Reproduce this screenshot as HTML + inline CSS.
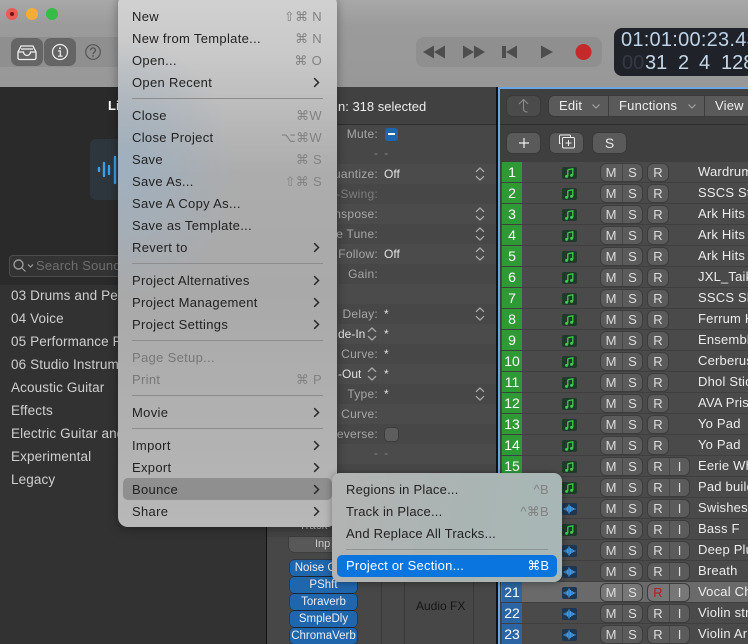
<!DOCTYPE html>
<html><head><meta charset="utf-8"><style>
html,body{margin:0;padding:0;background:#2a2a2a}
#p{position:relative;width:748px;height:644px;overflow:hidden;font-family:"Liberation Sans",sans-serif;font-size:13px;color:#e6e6e6}
#p div,#p svg{position:absolute}
.a{position:absolute;white-space:nowrap}
.l{left:11px;color:#cfcfcf;font-size:13.5px;letter-spacing:.12px;line-height:18px}
.il{right:370px;color:#a6a6a6;font-size:12px;line-height:21px;letter-spacing:.25px}
.iv{left:384px;color:#e0e0e0;font-size:12px;line-height:21px}
.band{left:267px;width:229px;height:20px}
.ud{left:474px;width:12px;height:18px}
.m{left:132px;color:#222;font-size:13px;letter-spacing:.32px;line-height:22px;height:22px}
.s2{letter-spacing:.22px}
.sc{right:426px;color:#828282;font-size:13px;line-height:22px;letter-spacing:.3px}
.ch{left:313px;width:7px;height:11px}
.sep{left:132px;width:191px;height:1px;background:#8d8d8d}
.r{left:501px;width:247px;height:20px;background:#4a4a4a;overflow:hidden}
.n{position:absolute;left:1px;top:0;width:20px;height:20px;color:#fff;font-size:14px;text-align:center;line-height:21px}
.g{background:#2f9a35}.b{background:#2c65a3}
.t{position:absolute;left:197px;top:0;color:#ececec;font-size:13px;line-height:20px;letter-spacing:.2px;white-space:nowrap}
.ms,.ri{position:absolute;top:2px;height:17px;background:#5b5b5b;border-radius:5px;box-shadow:0 0 0 1px #3c3c3c;color:#ddd;font-size:13px;line-height:17px}
.ms{left:100px;width:41px}.ri{left:147px;width:20px}.ri.w{width:41px}
.ms i,.ri i{position:absolute;top:0;font-style:normal;width:20px;text-align:center}
.ms i+i,.ri i+i{left:21px;border-left:1px solid #484848;width:19px}
.ic{position:absolute;left:61px;top:5px;width:15px;height:12px}
.btn{background:#5a5a5a;border-radius:5px;box-shadow:0 0 0 .5px #333;color:#e8e8e8;text-align:center}
.fx{left:290px;width:67px;height:16px;background:#2066ad;border-radius:4px;box-shadow:0 0 0 .5px #1c2430;color:#e8eef6;font-size:11.5px;line-height:16px;text-align:center;overflow:hidden;white-space:nowrap}
</style></head><body><div id="p">

<svg width="0" height="0" style="position:absolute"><defs>
<symbol id="note" viewBox="0 0 15 12"><rect width="15" height="12" rx="2" fill="#1f3a29"/><path d="M5.8 2.800l5-1v6.400M5.800 2.800v6.400" stroke="#45c552" stroke-width="1.300" fill="none"/><circle cx="4.600" cy="9.400" r="1.500" fill="#45c552"/><circle cx="9.600" cy="8.400" r="1.500" fill="#45c552"/></symbol>
<symbol id="wave" viewBox="0 0 15 12"><rect width="15" height="12" rx="2" fill="#1f3650"/><path d="M1.500 6h1.500M4 4.500v3M5.500 3.500v5M7 1.500v9M8.500 3v6M10 4v4M11.500 5v2M13 5.500v1" stroke="#3f9be8" stroke-width="1.300" fill="none"/></symbol>
<symbol id="ud" viewBox="0 0 12 18"><path d="M2 6.800L6 3l4 3.800M2 11.200L6 15l4-3.800" stroke="#b0b0b0" stroke-width="1.200" fill="none"/></symbol>
<symbol id="chv" viewBox="0 0 7 11"><path d="M1.200 1.200L5.500 5.500 1.200 9.800" stroke="#2a2a2a" stroke-width="1.500" fill="none"/></symbol>
</defs></svg>

<!-- toolbar -->
<div style="left:0;top:0;width:748px;height:87px;background:linear-gradient(#a8a8a8,#9b9b9b 30%,#989898)"></div>
<div style="left:0;top:37px;width:118px;height:30px;background:#8f8f8f"></div>
<div style="left:6px;top:8px;width:12px;height:12px;border-radius:50%;background:#ec5a56"></div>
<div style="left:10px;top:12px;width:4px;height:4px;border-radius:50%;background:#6c1512"></div>
<div style="left:26px;top:8px;width:12px;height:12px;border-radius:50%;background:#f3ac35"></div>
<div style="left:46px;top:8px;width:12px;height:12px;border-radius:50%;background:#35bc46"></div>
<div style="left:11px;top:38px;width:32px;height:28px;border-radius:7px;background:#656565"></div>
<div style="left:44px;top:38px;width:32px;height:28px;border-radius:7px;background:#656565"></div>
<svg style="left:16px;top:43px" width="22" height="18" viewBox="0 0 22 18"><path d="M2 9l3-6h12l3 6v6a1.500 1.500 0 0 1-1.500 1.500h-15A1.500 1.500 0 0 1 2 15zM2 9h5.500a3.500 3.500 0 0 0 7 0H20M5 6h12" stroke="#f0f0f0" stroke-width="1.300" fill="none"/></svg>
<svg style="left:51px;top:43px" width="18" height="18" viewBox="0 0 18 18"><circle cx="9" cy="9" r="7.500" stroke="#f0f0f0" stroke-width="1.200" fill="none"/><path d="M7 8h2.300v5M7 13.200h4.500" stroke="#f0f0f0" stroke-width="1.200" fill="none"/><circle cx="9" cy="5.300" r="1" fill="#f0f0f0"/></svg>
<svg style="left:85px;top:44px" width="16" height="16" viewBox="0 0 16 16"><circle cx="8" cy="8" r="7.300" stroke="#555" stroke-width="1.200" fill="none"/><path d="M5.600 6.200a2.400 2.300 0 1 1 3.600 2c-.8.500-1.200 1-1.200 1.900" stroke="#555" stroke-width="1.300" fill="none"/><circle cx="8" cy="12" r=".9" fill="#555"/></svg>
<div style="left:416px;top:37px;width:186px;height:30px;border-radius:8px;background:#8f8f8f"></div>
<svg style="left:416px;top:37px" width="186" height="30" viewBox="0 0 186 30"><g fill="#4d4d4d"><path d="M7 15l11-6.500v13zM18 15l11-6.500v13zM47 8.500l11 6.500-11 6.500zM58 8.500l11 6.500-11 6.500zM86 9h4v12h-4zM101 8.500v13l-11-6.500zM125 8.500l12 6.500-12 6.500z"/></g><circle cx="167.500" cy="15" r="8" fill="#c42a2b"/></svg>
<div style="left:614px;top:28px;width:140px;height:48px;border-radius:8px;background:#1f2229"></div>
<div class="a" style="left:621px;top:28px;color:#bcd3e8;font-size:20px;line-height:24px;letter-spacing:.25px">01:01:00:23.43</div>
<div class="a" style="left:622px;top:51px;color:#343944;font-size:20px;line-height:24px">00</div>
<div class="a" style="left:645px;top:51px;color:#c6d7e8;font-size:20px;line-height:24px">31</div>
<div class="a" style="left:678px;top:51px;color:#c6d7e8;font-size:20px;line-height:24px">2</div>
<div class="a" style="left:699px;top:51px;color:#c6d7e8;font-size:20px;line-height:24px">4</div>
<div class="a" style="left:721px;top:51px;color:#c6d7e8;font-size:20px;line-height:24px">128</div>

<!-- library -->
<div style="left:0;top:87px;width:266px;height:557px;background:#2a2a2a"></div>
<div style="left:0;top:285px;width:266px;height:359px;background:#323232"></div>
<div class="a" style="left:108px;top:97px;color:#fff;font-weight:bold;font-size:13px;line-height:18px">Li</div>
<div style="left:90px;top:139px;width:60px;height:61px;border-radius:6px;background:#2d353d"></div>
<svg style="left:97px;top:155px" width="24" height="30" viewBox="0 0 24 30"><path d="M2 13v3M7 8v13M12 11v8M18 2v26" stroke="#3e9ce6" stroke-width="2.400" stroke-linecap="round" fill="none"/></svg>
<div style="left:9px;top:255px;width:115px;height:20px;border:1px solid #4c4c4c;border-radius:4px;background:#333"></div>
<svg style="left:12px;top:258px" width="24" height="16" viewBox="0 0 24 16"><circle cx="6.500" cy="6.500" r="4.500" stroke="#9a9a9a" stroke-width="1.400" fill="none"/><path d="M10 10l3.500 3.500M16 6.500l2.500 2.500 2.500-2.500" stroke="#9a9a9a" stroke-width="1.200" fill="none"/></svg>
<div class="a" style="left:36px;top:257px;color:#6f6f6f;font-size:13px;line-height:18px;letter-spacing:.2px">Search Sounds</div>
<div class="a l" style="top:287px">03 Drums and Percussion</div>
<div class="a l" style="top:310px">04 Voice</div>
<div class="a l" style="top:333px">05 Performance Patches</div>
<div class="a l" style="top:356px">06 Studio Instruments</div>
<div class="a l" style="top:379px">Acoustic Guitar</div>
<div class="a l" style="top:402px">Effects</div>
<div class="a l" style="top:425px">Electric Guitar and Bass</div>
<div class="a l" style="top:448px">Experimental</div>
<div class="a l" style="top:471px">Legacy</div>

<!-- inspector -->
<div style="left:266px;top:87px;width:231px;height:557px;background:#474747;border-left:1px solid #111"></div>
<div style="left:267px;top:87px;width:229px;height:37px;background:#414141;border-bottom:1px solid #2e2e2e"></div>
<div class="a" style="left:338px;top:98px;color:#eee;font-size:13px;line-height:18px">n: 318 selected</div>
<div class="band" style="top:164px;background:#4b4b4b"></div><div class="band" style="top:204px;background:#4b4b4b"></div><div class="band" style="top:244px;background:#4b4b4b"></div><div class="band" style="top:284px;background:#4b4b4b"></div><div class="band" style="top:324px;background:#4b4b4b"></div><div class="band" style="top:364px;background:#4b4b4b"></div><div class="band" style="top:404px;background:#4b4b4b"></div><div class="band" style="top:444px;background:#4b4b4b"></div>
<div class="a il" style="top:124px">Mute:</div>
<div style="left:385px;top:128px;width:13px;height:13px;border-radius:3px;background:#1f65ad"></div><div style="left:388px;top:133px;width:7px;height:2px;background:#fff"></div>
<div class="a" style="left:374px;top:144px;color:#888;font-size:11.500px;line-height:20px">-&nbsp;&nbsp;-</div>
<div class="a il" style="top:164px">uantize:</div><div class="a iv" style="top:164px">Off</div>
<div class="a il" style="top:184px;color:#7d7d7d">-Swing:</div>
<div class="a il" style="top:204px">nspose:</div>
<div class="a il" style="top:224px">ne Tune:</div>
<div class="a il" style="top:244px">Follow:</div><div class="a iv" style="top:244px">Off</div>
<div class="a il" style="top:264px">Gain:</div>
<div class="a il" style="top:304px">Delay:</div><div class="a iv" style="top:304px">*</div>
<div class="a" style="left:338px;top:324px;color:#e0e0e0;font-size:12px;line-height:21px">de-In</div><div class="a iv" style="top:324px">*</div>
<div class="a il" style="top:344px">Curve:</div><div class="a iv" style="top:344px">*</div>
<div class="a" style="left:338px;top:364px;color:#e0e0e0;font-size:12px;line-height:21px">-Out</div><div class="a iv" style="top:364px">*</div>
<div class="a il" style="top:384px">Type:</div><div class="a iv" style="top:384px">*</div>
<div class="a il" style="top:404px">Curve:</div>
<div class="a il" style="top:424px">Reverse:</div>
<div style="left:385px;top:428px;width:13px;height:13px;border-radius:3px;background:#5d5d5d;box-shadow:0 0 0 .5px #2f2f2f"></div>
<div class="a" style="left:374px;top:444px;color:#888;font-size:11.500px;line-height:20px">-&nbsp;&nbsp;-</div>
<svg class="ud" style="top:165px" viewBox="0 0 12 18"><use href="#ud"/></svg>
<svg class="ud" style="top:205px" viewBox="0 0 12 18"><use href="#ud"/></svg>
<svg class="ud" style="top:225px" viewBox="0 0 12 18"><use href="#ud"/></svg>
<svg class="ud" style="top:245px" viewBox="0 0 12 18"><use href="#ud"/></svg>
<svg class="ud" style="top:305px" viewBox="0 0 12 18"><use href="#ud"/></svg>
<svg class="ud" style="top:385px" viewBox="0 0 12 18"><use href="#ud"/></svg>
<svg class="ud" style="left:366px;top:325px" viewBox="0 0 12 18"><use href="#ud"/></svg>
<svg class="ud" style="left:366px;top:365px" viewBox="0 0 12 18"><use href="#ud"/></svg>
<div style="left:267px;top:515px;width:229px;height:22px;background:#444"></div>
<div class="a" style="left:299px;top:517px;color:#bbb;font-size:11.500px;line-height:18px">Track</div>
<div style="left:289px;top:537px;width:68px;height:15px;background:#585858;border-radius:0 0 5px 5px;box-shadow:0 0 0 .5px #333"></div>
<div class="a" style="left:315px;top:537px;color:#ccc;font-size:11px;line-height:15px">Inp</div>
<div class="fx" style="top:560px">Noise Gate</div>
<div class="fx" style="top:577px">PShft</div>
<div class="fx" style="top:594px">Toraverb</div>
<div class="fx" style="top:611px">SmpleDly</div>
<div class="fx" style="top:628px">ChromaVerb</div>
<div style="left:381px;top:520px;width:1px;height:124px;background:#393939"></div>
<div style="left:404px;top:520px;width:1px;height:124px;background:#393939"></div>
<div style="left:473px;top:520px;width:1px;height:124px;background:#393939"></div>
<div class="a" style="left:416px;top:598px;color:#161616;font-size:12px;line-height:16px">Audio FX</div>

<!-- tracks -->
<div style="left:496px;top:87px;width:252px;height:557px;background:#111"></div>
<div style="left:498px;top:87px;width:250px;height:557px;background:#6aa6e0"></div>
<div style="left:500px;top:89px;width:248px;height:555px;background:#3f3f3f"></div>
<div style="left:500px;top:124px;width:248px;height:1px;background:#2e2e2e"></div>
<div class="btn" style="left:507px;top:96px;width:33px;height:20px;background:#4b4b4b"></div>
<svg style="left:518px;top:98px" width="12" height="16" viewBox="0 0 12 16"><path d="M1 6l4.500-4.500L10 6M5.500 1.500v9q0 3.500 4 3.500" stroke="#8a8a8a" stroke-width="1.100" fill="none"/></svg>
<div class="btn" style="left:549px;top:96px;width:199px;height:20px;border-radius:5px 0 0 5px"></div>
<div style="left:608px;top:96px;width:1px;height:20px;background:#3d3d3d"></div>
<div style="left:704px;top:96px;width:1px;height:20px;background:#3d3d3d"></div>
<div class="a" style="left:559px;top:97px;color:#eee;font-size:13px;line-height:17px;letter-spacing:.2px">Edit</div>
<div class="a" style="left:619px;top:97px;color:#eee;font-size:13px;line-height:17px;letter-spacing:.2px">Functions</div>
<div class="a" style="left:715px;top:97px;color:#eee;font-size:13px;line-height:17px;letter-spacing:.2px">View</div>
<svg style="left:591px;top:103px" width="10" height="7" viewBox="0 0 10 7"><path d="M1.500 1.500L5 5l3.500-3.500" stroke="#a5a5a5" stroke-width="1.100" fill="none"/></svg>
<svg style="left:687px;top:103px" width="10" height="7" viewBox="0 0 10 7"><path d="M1.500 1.500L5 5l3.500-3.500" stroke="#a5a5a5" stroke-width="1.100" fill="none"/></svg>
<div class="btn" style="left:507px;top:133px;width:33px;height:20px"></div>
<svg style="left:518px;top:137px" width="12" height="12" viewBox="0 0 12 12"><path d="M6 1v10M1 6h10" stroke="#eee" stroke-width="1.200"/></svg>
<div class="btn" style="left:550px;top:133px;width:33px;height:20px"></div>
<svg style="left:558px;top:134px" width="18" height="15" viewBox="0 0 18 15"><path d="M2.500 9.500h-1V2a1 1 0 0 1 1-1h9a1 1 0 0 1 1 1v1.500" stroke="#eee" stroke-width="1" fill="none"/><rect x="4.500" y="3.500" width="12" height="10.500" rx="1.200" stroke="#eee" fill="#5a5a5a"/><path d="M10.500 6v6M7.500 9h6" stroke="#eee"/></svg>
<div class="btn" style="left:593px;top:133px;width:33px;height:20px;font-size:14px;line-height:20px">S</div>

<div class="r" style="top:162px"><span class="n g">1</span><svg class="ic" viewBox="0 0 15 12"><use href="#note"/></svg><span class="ms"><i>M</i><i>S</i></span><span class="ri"><i>R</i></span><span class="t">Wardrums</span></div>
<div class="r" style="top:183px"><span class="n g">2</span><svg class="ic" viewBox="0 0 15 12"><use href="#note"/></svg><span class="ms"><i>M</i><i>S</i></span><span class="ri"><i>R</i></span><span class="t">SSCS Strings</span></div>
<div class="r" style="top:204px"><span class="n g">3</span><svg class="ic" viewBox="0 0 15 12"><use href="#note"/></svg><span class="ms"><i>M</i><i>S</i></span><span class="ri"><i>R</i></span><span class="t">Ark Hits</span></div>
<div class="r" style="top:225px"><span class="n g">4</span><svg class="ic" viewBox="0 0 15 12"><use href="#note"/></svg><span class="ms"><i>M</i><i>S</i></span><span class="ri"><i>R</i></span><span class="t">Ark Hits</span></div>
<div class="r" style="top:246px"><span class="n g">5</span><svg class="ic" viewBox="0 0 15 12"><use href="#note"/></svg><span class="ms"><i>M</i><i>S</i></span><span class="ri"><i>R</i></span><span class="t">Ark Hits</span></div>
<div class="r" style="top:267px"><span class="n g">6</span><svg class="ic" viewBox="0 0 15 12"><use href="#note"/></svg><span class="ms"><i>M</i><i>S</i></span><span class="ri"><i>R</i></span><span class="t">JXL_Taiko</span></div>
<div class="r" style="top:288px"><span class="n g">7</span><svg class="ic" viewBox="0 0 15 12"><use href="#note"/></svg><span class="ms"><i>M</i><i>S</i></span><span class="ri"><i>R</i></span><span class="t">SSCS Slam</span></div>
<div class="r" style="top:309px"><span class="n g">8</span><svg class="ic" viewBox="0 0 15 12"><use href="#note"/></svg><span class="ms"><i>M</i><i>S</i></span><span class="ri"><i>R</i></span><span class="t">Ferrum Hits</span></div>
<div class="r" style="top:330px"><span class="n g">9</span><svg class="ic" viewBox="0 0 15 12"><use href="#note"/></svg><span class="ms"><i>M</i><i>S</i></span><span class="ri"><i>R</i></span><span class="t">Ensemble</span></div>
<div class="r" style="top:351px"><span class="n g">10</span><svg class="ic" viewBox="0 0 15 12"><use href="#note"/></svg><span class="ms"><i>M</i><i>S</i></span><span class="ri"><i>R</i></span><span class="t">Cerberus</span></div>
<div class="r" style="top:372px"><span class="n g">11</span><svg class="ic" viewBox="0 0 15 12"><use href="#note"/></svg><span class="ms"><i>M</i><i>S</i></span><span class="ri"><i>R</i></span><span class="t">Dhol Stick</span></div>
<div class="r" style="top:393px"><span class="n g">12</span><svg class="ic" viewBox="0 0 15 12"><use href="#note"/></svg><span class="ms"><i>M</i><i>S</i></span><span class="ri"><i>R</i></span><span class="t">AVA Prism</span></div>
<div class="r" style="top:414px"><span class="n g">13</span><svg class="ic" viewBox="0 0 15 12"><use href="#note"/></svg><span class="ms"><i>M</i><i>S</i></span><span class="ri"><i>R</i></span><span class="t">Yo Pad</span></div>
<div class="r" style="top:435px"><span class="n g">14</span><svg class="ic" viewBox="0 0 15 12"><use href="#note"/></svg><span class="ms"><i>M</i><i>S</i></span><span class="ri"><i>R</i></span><span class="t">Yo Pad</span></div>
<div class="r" style="top:456px"><span class="n g">15</span><svg class="ic" viewBox="0 0 15 12"><use href="#note"/></svg><span class="ms"><i>M</i><i>S</i></span><span class="ri w"><i>R</i><i>I</i></span><span class="t">Eerie White</span></div>
<div class="r" style="top:477px"><span class="n g">16</span><svg class="ic" viewBox="0 0 15 12"><use href="#note"/></svg><span class="ms"><i>M</i><i>S</i></span><span class="ri w"><i>R</i><i>I</i></span><span class="t">Pad build</span></div>
<div class="r" style="top:498px"><span class="n b">17</span><svg class="ic" viewBox="0 0 15 12"><use href="#wave"/></svg><span class="ms"><i>M</i><i>S</i></span><span class="ri w"><i>R</i><i>I</i></span><span class="t">Swishes</span></div>
<div class="r" style="top:519px"><span class="n g">18</span><svg class="ic" viewBox="0 0 15 12"><use href="#note"/></svg><span class="ms"><i>M</i><i>S</i></span><span class="ri w"><i>R</i><i>I</i></span><span class="t">Bass F</span></div>
<div class="r" style="top:540px"><span class="n b">19</span><svg class="ic" viewBox="0 0 15 12"><use href="#wave"/></svg><span class="ms"><i>M</i><i>S</i></span><span class="ri w"><i>R</i><i>I</i></span><span class="t">Deep Pluck</span></div>
<div class="r" style="top:561px"><span class="n b">20</span><svg class="ic" viewBox="0 0 15 12"><use href="#wave"/></svg><span class="ms"><i>M</i><i>S</i></span><span class="ri w"><i>R</i><i>I</i></span><span class="t">Breath</span></div>
<div class="r" style="top:582px;background:#6a6a6a"><span class="n b">21</span><svg class="ic" viewBox="0 0 15 12"><use href="#wave"/></svg><span class="ms" style="background:#777"><i>M</i><i>S</i></span><span class="ri w" style="background:#777"><i style="color:#b0211e">R</i><i>I</i></span><span class="t">Vocal Chops</span></div>
<div class="r" style="top:603px"><span class="n b">22</span><svg class="ic" viewBox="0 0 15 12"><use href="#wave"/></svg><span class="ms"><i>M</i><i>S</i></span><span class="ri w"><i>R</i><i>I</i></span><span class="t">Violin strings</span></div>
<div class="r" style="top:624px"><span class="n b">23</span><svg class="ic" viewBox="0 0 15 12"><use href="#wave"/></svg><span class="ms"><i>M</i><i>S</i></span><span class="ri w"><i>R</i><i>I</i></span><span class="t">Violin Arps</span></div>

<!-- main menu -->
<div style="left:118px;top:-6px;width:219px;height:533px;border-radius:10px;background:radial-gradient(ellipse 120px 130px at 0px 175px,#9fb0bf,rgba(160,175,190,0) 100%),linear-gradient(#d1d1d1 0,#c9c9c9 60px,#acacac 180px,#a9a9a9 300px,#b4b4b4 480px,#b8b8b8);box-shadow:0 2px 10px rgba(0,0,0,.35)"></div>
<div class="a m" style="top:6px">New</div><div class="a sc" style="top:6px">⇧⌘ N</div>
<div class="a m" style="top:28px">New from Template...</div><div class="a sc" style="top:28px">⌘ N</div>
<div class="a m" style="top:50px">Open...</div><div class="a sc" style="top:50px">⌘ O</div>
<div class="a m" style="top:72px">Open Recent</div>
<div class="sep" style="top:98px"></div>
<div class="a m" style="top:105px">Close</div><div class="a sc" style="top:105px">⌘W</div>
<div class="a m" style="top:127px">Close Project</div><div class="a sc" style="top:127px">⌥⌘W</div>
<div class="a m" style="top:149px">Save</div><div class="a sc" style="top:149px">⌘ S</div>
<div class="a m" style="top:171px">Save As...</div><div class="a sc" style="top:171px">⇧⌘ S</div>
<div class="a m" style="top:193px">Save A Copy As...</div>
<div class="a m" style="top:215px">Save as Template...</div>
<div class="a m" style="top:237px">Revert to</div>
<div class="sep" style="top:263px"></div>
<div class="a m" style="top:270px">Project Alternatives</div>
<div class="a m" style="top:292px">Project Management</div>
<div class="a m" style="top:314px">Project Settings</div>
<div class="sep" style="top:340px"></div>
<div class="a m" style="top:347px;color:#777">Page Setup...</div>
<div class="a m" style="top:369px;color:#777">Print</div><div class="a sc" style="top:369px">⌘ P</div>
<div class="sep" style="top:395px"></div>
<div class="a m" style="top:402px">Movie</div>
<div class="sep" style="top:428px"></div>
<div class="a m" style="top:435px">Import</div>
<div class="a m" style="top:457px">Export</div>
<div style="left:123px;top:478px;width:209px;height:22px;border-radius:5px;background:#8f8f8f"></div>
<div class="a m" style="top:479px">Bounce</div>
<div class="a m" style="top:501px">Share</div>
<svg class="ch" style="top:77px" viewBox="0 0 7 11"><use href="#chv"/></svg>
<svg class="ch" style="top:242px" viewBox="0 0 7 11"><use href="#chv"/></svg>
<svg class="ch" style="top:275px" viewBox="0 0 7 11"><use href="#chv"/></svg>
<svg class="ch" style="top:297px" viewBox="0 0 7 11"><use href="#chv"/></svg>
<svg class="ch" style="top:319px" viewBox="0 0 7 11"><use href="#chv"/></svg>
<svg class="ch" style="top:407px" viewBox="0 0 7 11"><use href="#chv"/></svg>
<svg class="ch" style="top:440px" viewBox="0 0 7 11"><use href="#chv"/></svg>
<svg class="ch" style="top:462px" viewBox="0 0 7 11"><use href="#chv"/></svg>
<svg class="ch" style="top:484px" viewBox="0 0 7 11"><use href="#chv"/></svg>
<svg class="ch" style="top:506px" viewBox="0 0 7 11"><use href="#chv"/></svg>

<!-- submenu -->
<div style="left:332px;top:473px;width:230px;height:109px;border-radius:8px;background:linear-gradient(100deg,#b3b3b3,#a9b5b3 60%,#a8b7b6);box-shadow:0 1px 8px rgba(0,0,0,.35)"></div>
<div class="a m s2" style="left:346px;top:479px">Regions in Place...</div><div class="a sc" style="right:199px;top:479px">^B</div>
<div class="a m s2" style="left:346px;top:501px">Track in Place...</div><div class="a sc" style="right:199px;top:501px">^⌘B</div>
<div class="a m s2" style="left:346px;top:523px">And Replace All Tracks...</div>
<div style="left:346px;top:549px;width:202px;height:1px;background:#8f9594"></div>
<div style="left:337px;top:555px;width:220px;height:22px;border-radius:5px;background:#0a74df"></div>
<div class="a m s2" style="left:346px;top:555px;color:#fff">Project or Section...</div>
<div class="a" style="right:199px;top:555px;color:#fff;font-size:13px;line-height:22px">⌘B</div>

</div></body></html>
